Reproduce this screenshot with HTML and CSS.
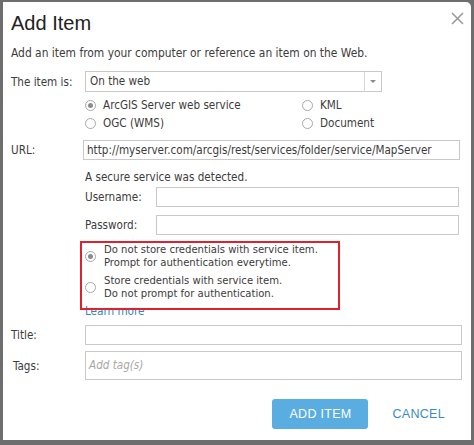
FILE: index.html
```html
<!DOCTYPE html>
<html lang="en">
<head>
    <meta charset="UTF-8">
    <title>Add Item</title>
    <link rel="stylesheet" href="styles.css">
</head>
<body>

<div class="dialog">
    <div class="dialog-header">
        <h2>Add Item</h2>
        <svg class="close-btn" width="13" height="13" viewBox="0 0 13 13">
            <path d="M1 1 L12 12 M12 1 L1 12" stroke="#9a9a9a" stroke-width="1.6" fill="none"/>
        </svg>
    </div>

    <div class="dialog-body">
        <p class="intro">Add an item from your computer or reference an item on the Web.</p>

        <div class="row row-select">
            <span class="label">The item is:</span>
            <div class="select">
                <span class="select-value">On the web</span>
                <span class="select-arrow"></span>
            </div>
        </div>

        <div class="type-grid">
            <label class="radio"><span class="dot checked"></span>ArcGIS Server web service</label>
            <label class="radio"><span class="dot"></span>KML</label>
            <label class="radio"><span class="dot"></span>OGC (WMS)</label>
            <label class="radio"><span class="dot"></span>Document</label>
        </div>

        <div class="row row-url">
            <span class="label">URL:</span>
            <div class="input url-input">http://myserver.com/arcgis/rest/services/folder/service/MapServer</div>
        </div>

        <div class="secure">
            <p class="secure-note">A secure service was detected.</p>

            <div class="row row-cred">
                <span class="cred-label">Username:</span>
                <div class="input cred-input"></div>
            </div>
            <div class="row row-cred row-pass">
                <span class="cred-label">Password:</span>
                <div class="input cred-input"></div>
            </div>

            <div class="store-opts">
                <label class="radio radio-2line">
                    <span class="dot checked"></span>
                    <span class="lines"><span>Do not store credentials with service item.</span><span>Prompt for authentication everytime.</span></span>
                </label>
                <label class="radio radio-2line second">
                    <span class="dot"></span>
                    <span class="lines"><span>Store credentials with service item.</span><span>Do not prompt for authentication.</span></span>
                </label>
            </div>

            <a href="#" class="learn-more">Learn more</a>
        </div>

        <div class="row row-title">
            <span class="label">Title:</span>
            <div class="input wide-input"></div>
        </div>

        <div class="row row-tags">
            <span class="label tags-label">Tags:</span>
            <div class="input wide-input tags-input"><span class="placeholder">Add tag(s)</span></div>
        </div>

        <div class="footer">
            <button class="btn-primary">ADD ITEM</button>
            <a href="#" class="btn-link">CANCEL</a>
        </div>
    </div>

    <!-- highlight round the credential options -->
    <div class="highlight"></div>
</div>

</body>
</html>
```

FILE: styles.css
```css
body {
    margin: 0;
    background-color: #6e6e6e;
    height: 445px;
    overflow: hidden;
}

.dialog {
    position: relative;
    margin: 2px 0 0 3px;
    width: 468px;
    height: 438px;
    background-color: #fff;
    border-radius: 0 5px 0 0;
    font-family: "DejaVu Sans Condensed", "DejaVu Sans", sans-serif;
    font-stretch: condensed;
    font-size: 11.6px;
    color: #3c3c3c;
}

/* title bar */
.dialog-header {
    position: relative;
    height: 44px;
    padding-left: 8px;
    box-sizing: border-box;
}

.dialog-header h2 {
    margin: 0;
    padding-top: 9px;
    font-family: "Liberation Sans", Arial, sans-serif;
    font-size: 20px;
    font-weight: normal;
    line-height: 24px;
    color: #222;
}

.close-btn {
    position: absolute;
    top: 10px;
    right: 7px;
}

.dialog-body {
    padding: 0 8px;
}

p {
    margin: 0;
}

.intro {
    height: 14px;
    line-height: 14px;
    font-size: 11.9px;
}

.row {
    display: flex;
    align-items: center;
}

.label {
    width: 74px;
    flex: none;
}

.input {
    box-sizing: border-box;
    height: 20px;
    border: 1px solid #c9c9c9;
    background-color: #fff;
    line-height: 18px;
    padding-left: 3px;
}

/* dropdown */
.row-select {
    margin-top: 11px;
    height: 21px;
}

.select {
    box-sizing: border-box;
    display: flex;
    width: 297px;
    height: 21px;
    border: 1px solid #c9c9c9;
}

.select-value {
    flex: 1;
    padding-left: 4px;
    line-height: 19px;
}

.select-arrow {
    position: relative;
    width: 16px;
    border-left: 1px solid #d6d6d6;
}

.select-arrow::after {
    content: "";
    position: absolute;
    left: 5px;
    top: 8px;
    border-left: 3px solid transparent;
    border-right: 3px solid transparent;
    border-top: 3px solid #8a8a8a;
}

/* item type radios */
.type-grid {
    display: grid;
    grid-template-columns: 217px auto;
    grid-auto-rows: 18px;
    margin: 4px 0 0 74px;
}

.radio {
    display: flex;
    align-items: center;
    gap: 7px;
}

.dot {
    box-sizing: border-box;
    position: relative;
    width: 11px;
    height: 11px;
    flex: none;
    border: 1px solid #a9a9a9;
    border-radius: 50%;
    background-color: #fff;
}

.dot.checked::after {
    content: "";
    position: absolute;
    left: 2px;
    top: 2px;
    width: 5px;
    height: 5px;
    border-radius: 50%;
    background-color: #8c8c8c;
}

.row-url {
    margin-top: 8px;
}

.url-input {
    width: 377px;
    margin-left: -2px;
}

/* credentials block */
.secure {
    margin-left: 74px;
}

.secure-note {
    margin-top: 10px;
    height: 14px;
    line-height: 14px;
}

.row-cred {
    margin-top: 3px;
}

.row-pass {
    margin-top: 8px;
}

.cred-label {
    width: 71px;
    flex: none;
}

.cred-input {
    width: 303px;
}

.store-opts {
    margin-top: 8px;
}

.radio-2line {
    height: 26px;
    gap: 8px;
}

.radio-2line.second {
    margin-top: 5px;
}

.lines {
    display: flex;
    flex-direction: column;
    font-size: 11.2px;
}

.lines span {
    height: 13px;
    line-height: 13px;
}

.learn-more {
    display: block;
    margin-top: 4px;
    line-height: 14px;
    color: #2f86c0;
    text-decoration: none;
}

.row-title {
    margin-top: 7px;
}

.wide-input {
    width: 377px;
}

.row-tags {
    margin-top: 6px;
}

.tags-label {
    padding-left: 2px;
    box-sizing: border-box;
}

.tags-input {
    height: 29px;
    line-height: 27px;
}

.placeholder {
    font-style: italic;
    color: #a8a8a8;
}

/* buttons */
.footer {
    display: flex;
    justify-content: flex-end;
    align-items: center;
    gap: 24px;
    margin-top: 19px;
    padding-right: 18px;
}

.btn-primary {
    width: 96px;
    height: 30px;
    border: none;
    border-radius: 3px;
    background-color: #5aade0;
    color: #fff;
    font-family: "Liberation Sans", Arial, sans-serif;
    font-size: 12.5px;
    letter-spacing: 0.3px;
}

.btn-link {
    color: #3a8cc5;
    text-decoration: none;
    font-family: "Liberation Sans", Arial, sans-serif;
    font-size: 12.5px;
    letter-spacing: 0.3px;
}

.highlight {
    position: absolute;
    left: 77px;
    top: 239px;
    width: 256px;
    height: 65px;
    border: 2px solid #e0202b;
}
```
